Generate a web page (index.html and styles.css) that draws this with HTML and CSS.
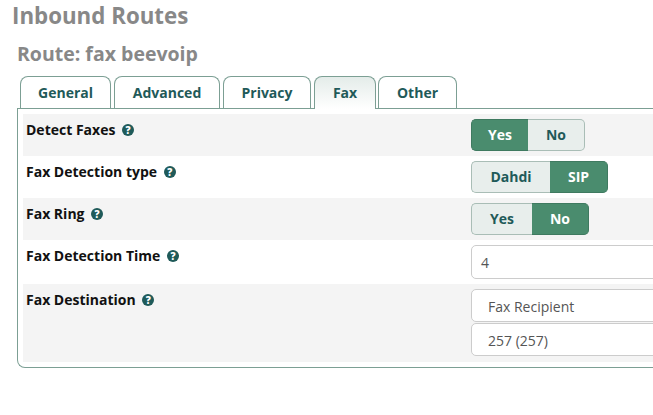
FILE: index.html
```html
<!DOCTYPE html>
<html lang="en">
<head>
    <meta charset="UTF-8">
    <title>Inbound Routes</title>
    <link rel="stylesheet" href="styles.css">
</head>
<body>
    <h1 class="page-title">Inbound Routes</h1>
    <h2 class="route-title">Route: fax beevoip</h2>

    <div class="tabs">
        <div class="tab tab-general">General</div>
        <div class="tab tab-advanced">Advanced</div>
        <div class="tab tab-privacy">Privacy</div>
        <div class="tab tab-fax active">Fax</div>
        <div class="tab tab-other">Other</div>
    </div>

    <div class="panel">
        <div class="row grey">
            <div class="label">Detect Faxes <span class="help">?</span></div>
            <div class="toggle">
                <span class="seg on w56">Yes</span>
                <span class="seg w58">No</span>
            </div>
        </div>
        <div class="row">
            <div class="label">Fax Detection type <span class="help">?</span></div>
            <div class="toggle">
                <span class="seg w78">Dahdi</span>
                <span class="seg on w59">SIP</span>
            </div>
        </div>
        <div class="row grey">
            <div class="label">Fax Ring <span class="help">?</span></div>
            <div class="toggle">
                <span class="seg w60">Yes</span>
                <span class="seg on w58">No</span>
            </div>
        </div>
        <div class="row tall">
            <div class="label">Fax Detection Time <span class="help">?</span></div>
            <div class="field plain">4</div>
        </div>
        <div class="row grey dest">
            <div class="label">Fax Destination <span class="help">?</span></div>
            <div class="stack">
                <div class="field">Fax Recipient</div>
                <div class="field">257 (257)</div>
            </div>
        </div>
    </div>
</body>
</html>
```

FILE: styles.css
```css
* {
    margin: 0;
    padding: 0;
    box-sizing: border-box;
}

html, body {
    height: 100%;
    overflow: hidden;
}

body {
    width: 800px;
    font-family: "Open Sans", sans-serif;
    background-color: #fff;
    color: #111;
}

.page-title {
    font-size: 22.3px;
    line-height: 27px;
    font-weight: 700;
    color: #888;
    padding: 2px 0 0 12px;
}

.route-title {
    font-size: 19.5px;
    line-height: 25px;
    font-weight: 700;
    color: #888;
    padding: 12px 0 0 17px;
}

.tabs {
    display: flex;
    gap: 3px;
    margin-top: 10px;
    padding-left: 20px;
    height: 32px;
    position: relative;
}

.tab {
    height: 32px;
    border: 1px solid #7c9f94;
    border-bottom: none;
    border-radius: 8px 8px 0 0;
    font-size: 14px;
    line-height: 32px;
    font-weight: 700;
    text-align: center;
    color: #1f5a59;
    background-color: #fff;
}

.tab-general { width: 91px; }
.tab-advanced { width: 106px; }
.tab-privacy { width: 88px; }
.tab-fax { width: 62px; margin-right: -1px; }
.tab-other { width: 79px; }

.tab.active {
    background: linear-gradient(to bottom, #e4ece9, #fff);
    height: 33px;
    position: relative;
    z-index: 1;
}

.panel {
    margin-left: 17px;
    height: 260px;
    padding: 5px 0 0 5px;
    border: 1px solid #7c9f94;
    border-radius: 0 0 0 8px;
    border-right: none;
}

.row {
    display: grid;
    grid-template-columns: 445px 1fr;
    height: 42px;
    padding: 5px 0 0 3px;
}

.row.grey {
    background-color: #f4f4f4;
}

.row.tall {
    height: 44px;
}

.row.dest {
    height: 78px;
}

.label {
    font-size: 14px;
    line-height: 19px;
    font-weight: 700;
    color: #111;
    padding-top: 1px;
}

.help {
    display: inline-block;
    width: 12px;
    height: 12px;
    margin-left: 3px;
    border-radius: 50%;
    background-color: #1f5a59;
    color: #fff;
    font-size: 10px;
    line-height: 12px;
    font-weight: 800;
    text-align: center;
    vertical-align: 1px;
}

.toggle {
    display: flex;
    height: 32px;
    justify-self: start;
}

.seg {
    height: 32px;
    font-size: 14px;
    line-height: 30px;
    font-weight: 700;
    text-align: center;
    color: #1f5a59;
    background-color: #e8eeec;
    border: 1px solid #a9bdb6;
}

.seg:first-child {
    border-radius: 5px 0 0 5px;
    border-right: none;
}

.seg:last-child {
    border-radius: 0 5px 5px 0;
    border-left: none;
}

.seg.on {
    color: #fff;
    background-color: #4a8c6e;
    border-color: #3f7a60;
}

.w56 { width: 57px; }
.w58 { width: 57px; }
.w78 { width: 79px; }
.w59 { width: 58px; }
.w60 { width: 61px; }

.stack {
    display: flex;
    flex-direction: column;
    gap: 1px;
}

.field {
    height: 33px;
    width: 260px;
    padding-left: 16px;
    font-size: 14px;
    line-height: 33px;
    color: #555;
    background-color: #fff;
    border: 1px solid #ccc;
    border-radius: 5px;
}

.field.plain {
    height: 34px;
    padding-left: 9px;
}
```
